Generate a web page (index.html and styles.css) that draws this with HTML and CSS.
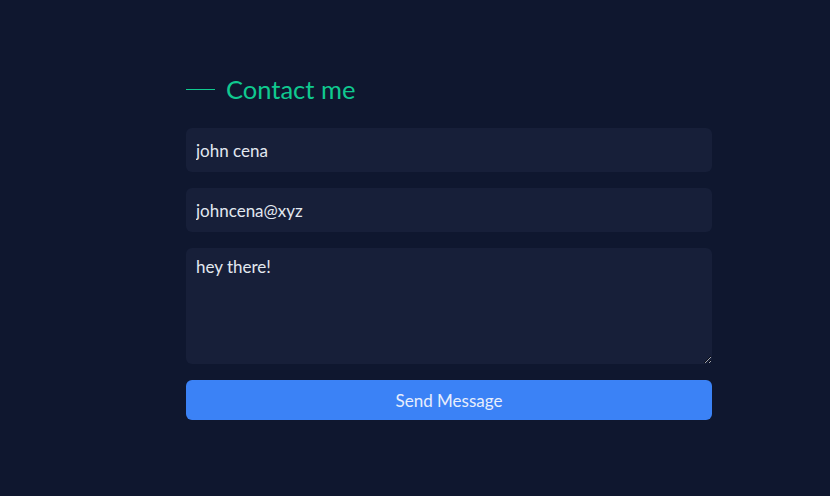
FILE: index.html
```html
<!DOCTYPE html>
<html lang="en">
<head>
    <meta charset="UTF-8">
    <meta name="viewport" content="width=device-width, initial-scale=1.0">
    <title>Contact me</title>
    <link rel="stylesheet" href="styles.css">
</head>
<body>
    <section class="contact">
        <h2 class="contact-title"><span class="title-line"></span>Contact me</h2>
        <form class="contact-form">
            <input type="text" class="field" value="john cena">
            <input type="email" class="field" value="johncena@xyz">
            <textarea class="field field-message">hey there!</textarea>
            <button type="button" class="send-btn">Send Message</button>
        </form>
    </section>
</body>
</html>
```

FILE: styles.css
```css
body {
    font-family: 'Lato', 'Noto Sans', sans-serif;
    margin: 0;
    padding: 0;
    background-color: #0f172f;
    color: #e2e8f0;
}
.contact {
    width: 526px;
    margin: 0 0 0 186px;
    padding-top: 74px;
}
.contact-title {
    display: flex;
    align-items: center;
    gap: 11px;
    margin: 0 0 24px;
    font-size: 25.5px;
    font-weight: 400;
    color: #10c98f;
    line-height: 30px;
}
.title-line {
    width: 29px;
    height: 1px;
    background-color: #10c98f;
}
.contact-form {
    display: flex;
    flex-direction: column;
    gap: 16px;
}
.field {
    box-sizing: border-box;
    width: 100%;
    height: 44px;
    padding: 0 10px;
    border: none;
    border-radius: 6px;
    background-color: #171f39;
    color: #e2e8f0;
    font-family: inherit;
    font-size: 17px;
    outline: none;
}
.field-message {
    height: 116px;
    padding: 8px 10px;
    line-height: 22px;
    resize: vertical;
    display: block;
}
.send-btn {
    height: 40px;
    border: none;
    border-radius: 6px;
    background-color: #3b82f6;
    color: #e8eefc;
    font-family: inherit;
    font-size: 17px;
    cursor: pointer;
}
```
